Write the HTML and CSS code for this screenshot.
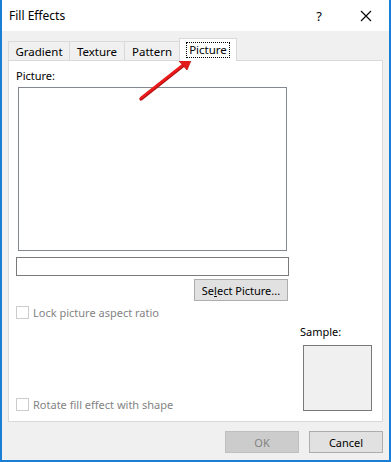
FILE: index.html
```html
<!DOCTYPE html>
<html lang="en">
<head>
    <meta charset="UTF-8">
    <title>Fill Effects</title>
    <link rel="stylesheet" href="styles.css">
</head>
<body>
    <div class="window">
        <div class="titlebar">
            <span class="title">Fill Effects</span>
            <span class="help">?</span>
            <svg class="close" width="12" height="12" viewBox="0 0 12 12">
                <path d="M1 1 L11 11 M11 1 L1 11" stroke="#000" stroke-width="1.1" fill="none"/>
            </svg>
        </div>
        <div class="body">
            <div class="tabs">
                <div class="tab gradient">Gradient</div>
                <div class="tab texture">Texture</div>
                <div class="tab pattern">Pattern</div>
                <div class="tab active"><span class="focus">Picture</span></div>
            </div>
            <div class="panel">
                <div class="left">
                    <div class="label">Picture:</div>
                    <div class="picbox"></div>
                    <div class="field"></div>
                    <div class="btnrow">
                        <button class="btn select">Se<u>l</u>ect Picture...</button>
                    </div>
                    <label class="check">
                        <span class="box"></span>
                        <span>Lock picture aspect ratio</span>
                    </label>
                    <label class="check last">
                        <span class="box"></span>
                        <span>Rotate fill effect with shape</span>
                    </label>
                </div>
                <div class="right">
                    <div class="label">Sample:</div>
                    <div class="sample"></div>
                </div>
            </div>
            <div class="actions">
                <button class="btn action" disabled>OK</button>
                <button class="btn action">Cancel</button>
            </div>
        </div>
        <!-- callout arrow drawn over the dialog -->
        <svg class="arrow" width="391" height="462" viewBox="0 0 391 462">
            <line x1="141" y1="99" x2="184" y2="65" stroke="#b01010" stroke-width="3.4" stroke-linecap="round"/>
            <line x1="141" y1="98" x2="184" y2="64" stroke="#ec1c1c" stroke-width="2.4" stroke-linecap="round"/>
            <polygon points="192,58 179,61 187,70" fill="#e41b1b" stroke="#c21414" stroke-width="0.8" stroke-linejoin="round"/>
        </svg>
    </div>
</body>
</html>
```

FILE: styles.css
```css
*{
    padding: 0;
    margin: 0;
    box-sizing: border-box;
}
body{
    width: 391px;
    height: 462px;
    font-family: "Noto Sans", "Open Sans", sans-serif;
    font-size: 11px;
    color: #000;
    overflow: hidden;
}
.window{
    position: relative;
    width: 391px;
    height: 462px;
    border: 2px solid #1a7fd4;
    border-top: none;
    background: #f0f0f0;
    display: flex;
    flex-direction: column;
}
.titlebar{
    height: 31px;
    background: #fff;
    display: flex;
    align-items: center;
    padding-left: 7px;
}
.title{
    font-size: 12px;
    flex: 1;
}
.help{
    font-size: 13px;
    margin-right: 38px;
}
.close{
    margin-right: 17px;
}
.body{
    flex: 1;
    padding: 7px 6px 0 6px;
    display: flex;
    flex-direction: column;
}
.tabs{
    display: flex;
    align-items: flex-end;
    height: 22px;
    position: relative;
    z-index: 1;
}
.tab{
    height: 19px;
    border: 1px solid #d9d9d9;
    border-bottom: none;
    margin-right: -1px;
    display: flex;
    align-items: center;
    justify-content: center;
    background: #f0f0f0;
    font-size: 11.5px;
}
.gradient{
    width: 62px;
}
.texture{
    width: 56px;
}
.pattern{
    width: 56px;
}
.tab.active{
    width: 58px;
    height: 23px;
    margin-bottom: -1px;
    background: #fff;
}
.focus{
    border: 1px dotted #000;
    padding: 0 2px;
    line-height: 14px;
}
.panel{
    height: 362px;
    background: #fff;
    border: 1px solid #d9d9d9;
    display: flex;
    padding: 7px 0 10px 7px;
}
.left{
    width: 273px;
    display: flex;
    flex-direction: column;
}
.label{
    line-height: 16px;
}
.picbox{
    margin: 3px 0 0 2px;
    width: 269px;
    height: 164px;
    border: 1px solid #828790;
}
.field{
    margin-top: 6px;
    height: 19px;
    border: 1px solid #7a7a7a;
}
.btnrow{
    display: flex;
    justify-content: flex-end;
    margin-top: 3px;
    padding-right: 1px;
}
.btn{
    font-family: inherit;
    font-size: 11px;
    background: #e1e1e1;
    border: 1px solid #adadad;
    height: 22px;
    color: #000;
}
.select{
    width: 94px;
}
.check{
    display: flex;
    align-items: center;
    color: #838383;
    margin-top: 5px;
    line-height: 13px;
}
.check.last{
    margin-top: auto;
}
.box{
    width: 13px;
    height: 13px;
    border: 1px solid #cccccc;
    margin-right: 4px;
}
.right{
    display: flex;
    flex-direction: column;
    justify-content: flex-end;
    margin-left: 11px;
}
.sample{
    margin: 5px 0 0 3px;
    width: 69px;
    height: 66px;
    border: 1px solid #7a7a7a;
    background: #f0f0f0;
}
.actions{
    display: flex;
    justify-content: flex-end;
    gap: 10px;
    margin-top: 9px;
}
.action{
    width: 74px;
}
.action:disabled{
    background: #cccccc;
    border-color: #bfbfbf;
    color: #838383;
}
.arrow{
    position: absolute;
    left: -2px;
    top: 0;
    pointer-events: none;
}
```
